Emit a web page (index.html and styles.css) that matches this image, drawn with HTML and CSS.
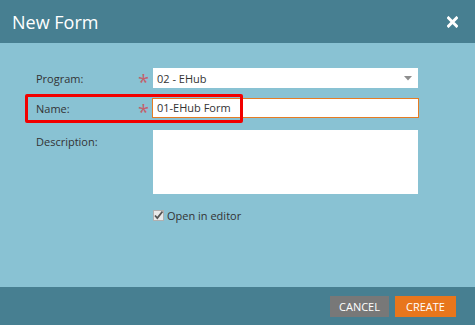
FILE: index.html
```html
<!DOCTYPE html>
<html>
<head>
<meta charset="utf-8">
<link rel="stylesheet" href="styles.css">
</head>
<body>
<div class="dialog">
  <div class="header">
    <div class="title">New Form</div>
    <svg class="close" width="11" height="12" viewBox="0 0 11 12"><path d="M1.5 2 L9.5 10 M9.5 2 L1.5 10" stroke="#fff" stroke-width="3" stroke-linecap="square"/></svg>
  </div>
  <div class="body">
    <div class="row">
      <div class="label">Program:</div>
      <div class="star">*</div>
      <div class="select">
        <span>02 - EHub</span>
        <svg class="arrow" width="8" height="5" viewBox="0 0 8 5"><path d="M0 0 H8 L4 4.5 Z" fill="#8e8e8e"/></svg>
      </div>
    </div>
    <div class="row row-name">
      <div class="label">Name:</div>
      <div class="star">*</div>
      <div class="input">01-EHub Form</div>
      <div class="highlight"></div>
    </div>
    <div class="row row-desc">
      <div class="label label-top">Description:</div>
      <div class="spacer"></div>
      <div class="textarea"></div>
    </div>
    <div class="row row-check">
      <div class="label"></div>
      <div class="spacer"></div>
      <div class="check">
        <svg class="box" width="11" height="11" viewBox="0 0 11 11"><rect x="0.5" y="0.5" width="10" height="10" fill="#e9e9e9" stroke="#b0b0b0"/><path d="M2 5.5 L4.3 8 L9.5 1.5" fill="none" stroke="#555" stroke-width="1.8"/></svg>
        <span>Open in editor</span>
      </div>
    </div>
  </div>
  <div class="footer">
    <div class="btn cancel">CANCEL</div>
    <div class="btn create">CREATE</div>
  </div>
</div>
</body>
</html>
```
FILE: styles.css
```css
html, body {
  margin: 0;
  padding: 0;
}
body {
  width: 475px;
  height: 325px;
  overflow: hidden;
  font-family: "Open Sans", "Liberation Sans", sans-serif;
}
.dialog {
  width: 475px;
  height: 325px;
  display: flex;
  flex-direction: column;
  background: #89c2d3;
}
.header {
  height: 43px;
  background: #477f91;
  display: flex;
  align-items: center;
  justify-content: space-between;
  padding: 0 17px 0 12px;
  flex-shrink: 0;
}
.title {
  color: #fff;
  font-size: 18px;
  line-height: 22px;
  margin-top: 1px;
}
.close {
  display: block;
  margin-top: 1px;
}
.body {
  flex: 1;
  padding: 25px 0 0 36px;
  display: flex;
  flex-direction: column;
}
.row {
  display: flex;
  align-items: center;
  position: relative;
}
.row-name {
  margin-top: 10px;
}
.row-desc {
  margin-top: 12px;
  align-items: flex-start;
}
.row-check {
  margin-top: 14px;
}
.label {
  width: 102px;
  font-size: 11px;
  line-height: 15px;
  color: #333;
}
.label-top {
  padding-top: 4px;
}
.spacer {
  width: 15px;
}
.star {
  width: 15px;
  height: 28px;
  margin: -4px 0;
  color: #c3606c;
  font-size: 20px;
  line-height: 36px;
}
.select {
  width: 261px;
  height: 20px;
  background: #fff;
  padding-left: 4px;
  display: flex;
  align-items: center;
  justify-content: space-between;
  font-size: 11px;
  color: #333;
}
.arrow {
  margin-right: 6px;
}
.input {
  width: 261px;
  height: 18px;
  margin-left: -1px;
  background: #fff;
  border: 1px solid #e57c24;
  padding-left: 4px;
  font-size: 11px;
  line-height: 18px;
  color: #333;
}
.textarea {
  width: 265px;
  height: 64px;
  background: #fff;
}
.check {
  display: flex;
  align-items: center;
  font-size: 11px;
  color: #333;
}
.box {
  display: block;
  margin-right: 3px;
}
.highlight {
  position: absolute;
  left: -11px;
  top: -4px;
  width: 212px;
  height: 23px;
  border: 3px solid #f20000;
  border-radius: 2px;
}
.footer {
  height: 38px;
  background: #477f91;
  display: flex;
  justify-content: flex-end;
  align-items: center;
  padding-right: 19px;
  gap: 6px;
  flex-shrink: 0;
}
.btn {
  height: 21px;
  line-height: 21px;
  font-size: 11px;
  color: #fff;
  text-align: center;
  margin-top: 1px;
}
.cancel {
  width: 59px;
  background: #787878;
}
.create {
  width: 61px;
  background: #e8761c;
}
```
